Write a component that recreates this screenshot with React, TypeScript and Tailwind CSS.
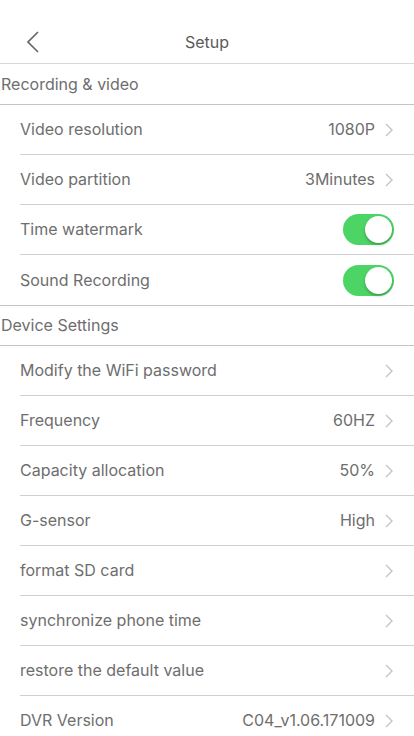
const Chevron = () => (
  <svg width="8" height="14" viewBox="0 0 8 14" className="ml-[10px] shrink-0">
    <path d="M1 1l6 6-6 6" fill="none" stroke="#c4c4c8" strokeWidth="1.4" />
  </svg>
);

const Toggle = () => (
  <div className="relative h-[31px] w-[51px] rounded-full bg-[#4cd464]">
    <div className="absolute right-[2px] top-[2px] h-[27px] w-[27px] rounded-full bg-white shadow-[0_2px_3px_rgba(0,0,0,0.25)]" />
  </div>
);

type RowProps = { label: string; value?: string; toggle?: boolean; last?: boolean };

const Row = ({ label, value, toggle, last }: RowProps) => (
  <div className={`ml-5 flex h-[50px] items-center pr-[21px] ${last ? '' : 'border-b border-[#d0d0d4]'}`}>
    <span className="flex-1 pb-[1px] text-[16px] text-[#6e6e6e]">{label}</span>
    {toggle ? (
      <div className="-mr-[1px]">
        <Toggle />
      </div>
    ) : (
      <>
        {value && <span className="pb-[1px] text-[16px] text-[#6e6e6e]">{value}</span>}
        <Chevron />
      </>
    )}
  </div>
);

const Section = ({ title, short }: { title: string; short?: boolean }) => (
  <div
    className={`flex items-center border-b border-[#c4c4c8] pb-[1px] pl-[1px] text-[16px] text-[#6e6e6e] ${short ? 'h-[40px]' : 'h-[41px]'}`}
  >
    {title}
  </div>
);

export default function App() {
  return (
    <div className="min-h-[736px] w-[414px] overflow-hidden bg-white font-['Inter','Liberation_Sans',sans-serif]">
      <div className="relative flex h-[64px] items-center justify-center border-b border-[#d8d8dc] pt-[20px]">
        <svg width="12" height="22" viewBox="0 0 12 22" className="absolute left-[27px] top-[31px]">
          <path d="M11 1L1 11l10 10" fill="none" stroke="#666" strokeWidth="1.6" />
        </svg>
        <span className="text-[16px] text-[#5a5a5a]">Setup</span>
      </div>
      <Section title="Recording & video" />
      <Row label="Video resolution" value="1080P" />
      <Row label="Video partition" value="3Minutes" />
      <Row label="Time watermark" toggle />
      <Row label="Sound Recording" toggle last />
      <div className="border-t border-[#c4c4c8]" />
      <Section title="Device Settings" short />
      <Row label="Modify the WiFi password" />
      <Row label="Frequency" value="60HZ" />
      <Row label="Capacity allocation" value="50%" />
      <Row label="G-sensor" value="High" />
      <Row label="format SD card" />
      <Row label="synchronize phone time" />
      <Row label="restore the default value" />
      <Row label="DVR Version" value="C04_v1.06.171009" />
    </div>
  );
}
